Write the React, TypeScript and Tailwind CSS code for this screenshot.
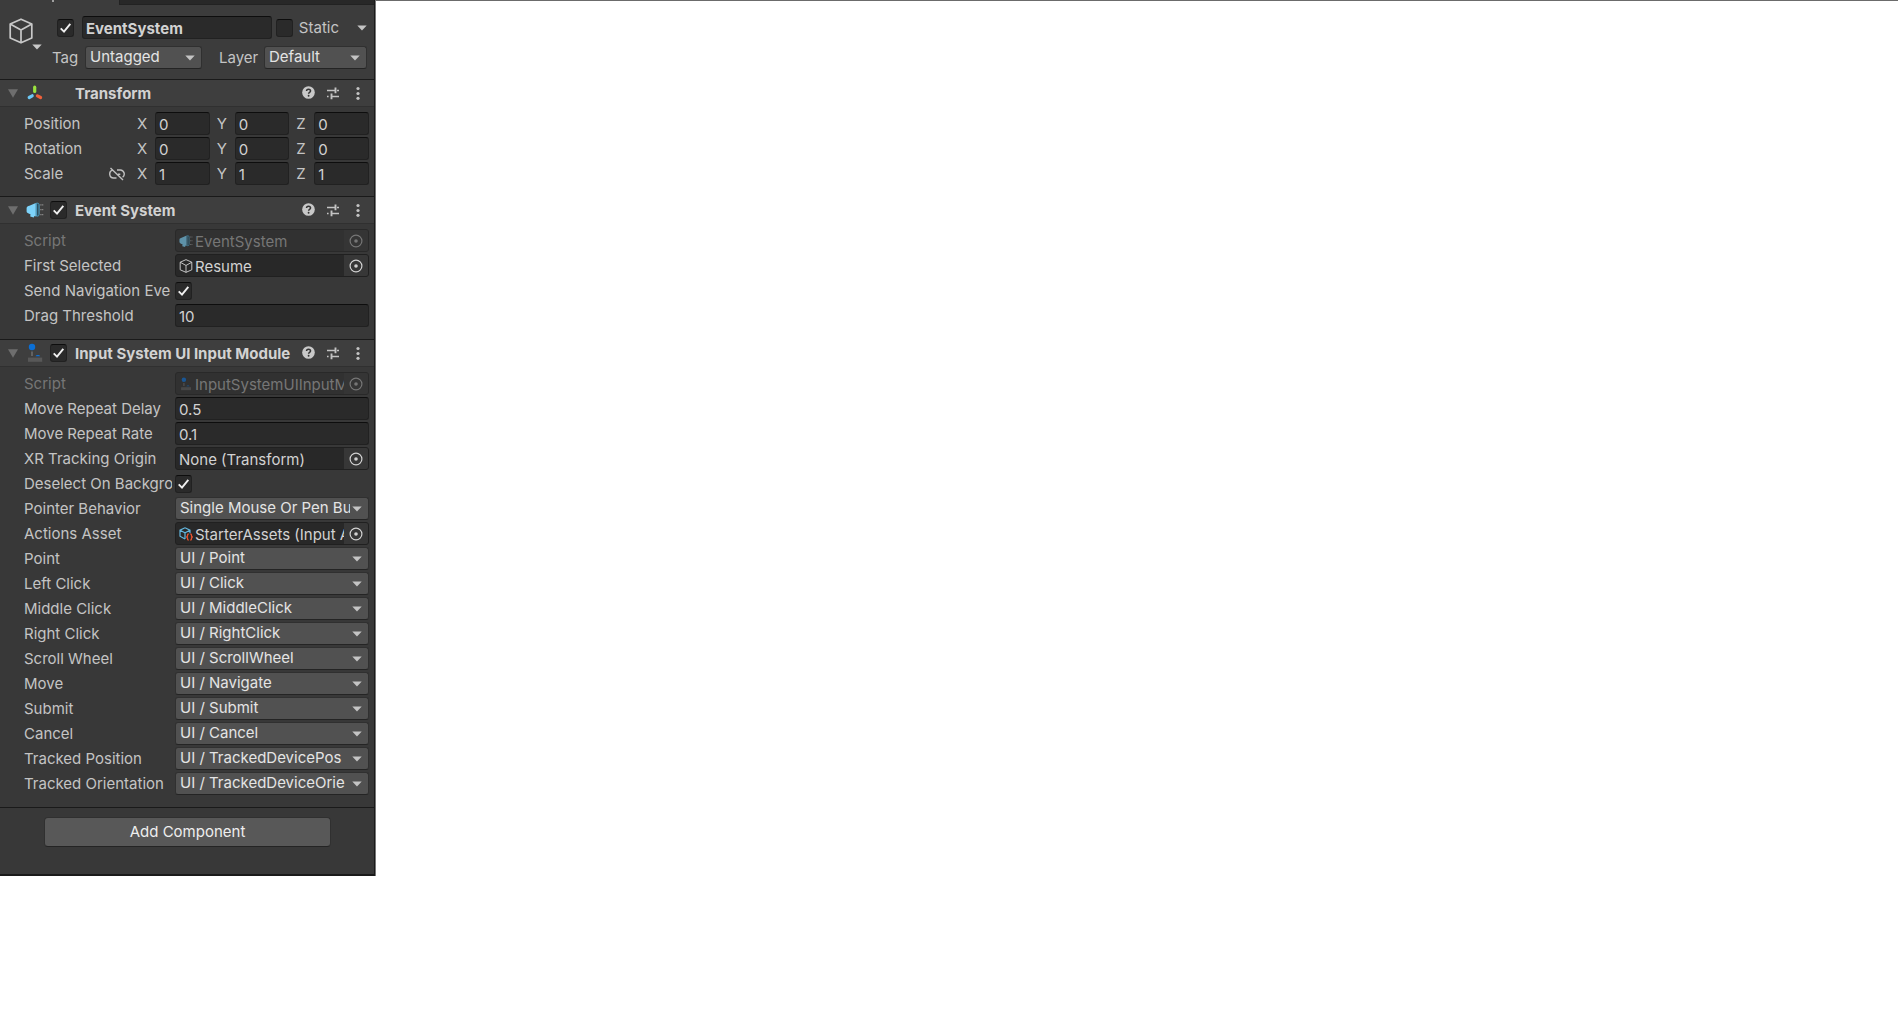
import { useId, useState, type ReactNode } from "react";

/* ---------- icons ---------- */

function CubeIcon({ className }: { className: string }) {
  return (
    <svg viewBox="0 0 24 26" fill="none" stroke="currentColor" strokeWidth="1.7" strokeLinejoin="round" className={className} aria-hidden="true">
      <path d="M12 1.2 22.8 6v14L12 24.8 1.2 20V6z" />
      <path d="M1.2 6 12 12l10.8-6M12 12v12.8" />
    </svg>
  );
}

function Triangle({ className }: { className: string }) {
  return (
    <svg viewBox="0 0 10 6" fill="currentColor" className={className} aria-hidden="true">
      <path d="M.3.4h9.400L5 5.600z" />
    </svg>
  );
}

function FoldoutIcon() {
  return (
    <svg viewBox="0 0 10 9" fill="currentColor" className="h-[9px] w-[10px]" aria-hidden="true">
      <path d="M0 .2h10L5 8.800z" />
    </svg>
  );
}

function TransformIcon() {
  return (
    <svg viewBox="0 0 18 18" className="h-[18px] w-[18px]" strokeLinecap="round" strokeWidth="3.2" aria-hidden="true">
      <path d="M8.700 3.200v4.200" stroke="#9be33f" />
      <path d="M6.200 11.800 3.200 13.500" stroke="#6cc8f5" />
      <path d="m11.400 11.800 3.200 1.700" stroke="#f0603a" />
    </svg>
  );
}

function MegaphoneIcon({ className }: { className: string }) {
  return (
    <svg viewBox="0 0 18 18" className={className} aria-hidden="true">
      <path d="M.6 7C.6 5.600 2 5.200 3.400 4.700L9.800 2v13.400l-1.400-.5-.6 1.700-3.600-1 .3-2.400-1.300-.5C1.600 12 .6 11.600.6 10.400z" fill="#7dd3fa" />
      <path d="M10.400 2.200h1.200c1.100 0 1.500.8 1.500 1.800v9.200c0 1.100-.5 1.900-1.500 1.900h-1.200z" fill="#2c4f60" stroke="#4fa3c9" strokeWidth="1" />
      <path d="M14.300 3.800h3M14.300 8.700h3M14.300 13.600h3" stroke="#8a8a8a" strokeWidth="1.300" strokeDasharray="1.300 .5" />
    </svg>
  );
}

function JoystickIcon({ className }: { className: string }) {
  return (
    <svg viewBox="0 0 18 20" className={className} aria-hidden="true">
      <circle cx="6" cy="4" r="3.200" fill="#0b6fd6" />
      <path d="M5 8.500h2V13H5z" fill="#626262" />
      <path d="M9.500 13.200c.5-1.600 4.200-1.600 4.700 0z" fill="#0b6fd6" />
      <path d="M2 14.600h14.200v4.200H2z" fill="#585858" />
    </svg>
  );
}

function ActionAssetIcon({ className }: { className: string }) {
  return (
    <svg viewBox="0 0 14 14" fill="none" className={className} aria-hidden="true">
      <path d="M6 .8 11 3.200v3M6 .8 1 3.200v6L6 12M1 3.200 6 5.800l5-2.600M6 5.800V12" stroke="#62b5dc" strokeWidth="1.200" />
      <path d="M9.700 7q-1.200 0-1.200 1.200v1L7.700 10l.8.800v1q0 1.200 1.200 1.200M11.300 7q1.200 0 1.200 1.200v1l.8.800-.8.800v1q0 1.200-1.200 1.200" stroke="#f0532d" strokeWidth="1.300" />
    </svg>
  );
}

function HelpIcon() {
  return (
    <svg viewBox="0 0 14 14" className="h-[13px] w-[13px]" aria-hidden="true">
      <circle cx="7" cy="7" r="6.800" fill="#c8c8c8" />
      <path d="M4.900 5.500c0-1.300.9-2.100 2.100-2.100s2.200.8 2.200 1.900c0 1.500-2.100 1.500-2.100 3" fill="none" stroke="#333" strokeWidth="1.600" />
      <circle cx="7.100" cy="10.500" r="1" fill="#333" />
    </svg>
  );
}

function PresetIcon() {
  return (
    <svg viewBox="0 0 14 14" className="h-[14px] w-[14px]" fill="none" stroke="#c4c4c4" aria-hidden="true">
      <path d="M1 4.500h8M11 4.500h2M1 10.500h1.600M5.500 10.500H13" strokeWidth="1.300" />
      <path d="M9.500 1.500v5.700M5.500 7.500v5.700" strokeWidth="1.900" />
    </svg>
  );
}

function MoreIcon() {
  return (
    <svg viewBox="0 0 4 14" className="h-[14px] w-[4px]" fill="#c4c4c4" aria-hidden="true">
      <circle cx="2" cy="2.500" r="1.600" />
      <circle cx="2" cy="7.500" r="1.600" />
      <circle cx="2" cy="12.300" r="1.600" />
    </svg>
  );
}

function UnlinkIcon() {
  return (
    <svg viewBox="0 0 16 14" className="h-[14px] w-[16px]" fill="none" stroke="#c0c0c0" strokeWidth="1.400" aria-hidden="true">
      <path d="M3.500 3.200A4 4 0 0 0 4.600 11H7.500M8 3h3.400a4 4 0 0 1 2.200 7.200M1.500 1l12.500 12M9 7.200h2.300" />
    </svg>
  );
}

function PickerIcon() {
  return (
    <svg viewBox="0 0 14 14" className="h-[14px] w-[14px]" aria-hidden="true">
      <circle cx="7" cy="7" r="5.900" fill="none" stroke="currentColor" strokeWidth="1.200" />
      <circle cx="7" cy="7" r="1.800" fill="currentColor" />
    </svg>
  );
}

/* ---------- controls ---------- */

function Tick({ id, label, initial = true }: { id?: string; label?: string; initial?: boolean }) {
  const [on, setOn] = useState(initial);
  return (
    <span className="relative h-[18px] w-[17px] shrink-0">
      <input
        id={id}
        type="checkbox"
        aria-label={label}
        checked={on}
        onChange={() => setOn(!on)}
        className="block h-[18px] w-[17px] appearance-none rounded-[3px] border border-[#212121] border-t-[#0d0d0d] bg-[#2a2a2a]"
      />
      {on && (
        <svg viewBox="0 0 17 18" fill="none" stroke="#f0f0f0" strokeWidth="1.900" className="pointer-events-none absolute inset-0 h-[18px] w-[17px]" aria-hidden="true">
          <path d="M3.700 9.300 7 12.600l6.300-7.700" />
        </svg>
      )}
    </span>
  );
}

function TextField({ id, label, value, bold = false }: { id?: string; label?: string; value: string; bold?: boolean }) {
  return (
    <input
      id={id}
      aria-label={label}
      defaultValue={value}
      className={
        "h-[23px] w-full min-w-0 flex-1 rounded-[3px] border border-[#212121] border-t-[#0d0d0d] bg-[#2a2a2a] px-[3px] pt-[2px] text-[#d2d2d2] " +
        (bold ? "font-bold" : "")
      }
    />
  );
}

function Dropdown({ id, value }: { id: string; value: string }) {
  return (
    <span className="relative min-w-0 flex-1">
      <select
        id={id}
        className="block h-[23px] w-full appearance-none rounded-[3px] border border-[#303030] border-b-[#242424] bg-[#515151] pr-[18px] pb-[2px] pl-[4px] text-[#e4e4e4]"
      >
        <option>{value}</option>
      </select>
      <Triangle className="pointer-events-none absolute top-[9px] right-[7px] h-[6px] w-[10px] text-[#c4c4c4]" />
    </span>
  );
}

function ObjectField({ id, value, icon, disabled = false }: { id: string; value: string; icon?: ReactNode; disabled?: boolean }) {
  return (
    <span
      className={
        "flex h-[23px] min-w-0 flex-1 items-center overflow-hidden rounded-[3px] border pl-[3px] " +
        (disabled ? "border-[#292929] bg-[#313131] text-[#767676]" : "border-[#202020] bg-[#282828] text-[#d2d2d2]")
      }
    >
      {icon}
      <input id={id} readOnly disabled={disabled} value={value} className="h-full min-w-0 flex-1 bg-transparent pt-[2px]" />
      <button
        type="button"
        disabled={disabled}
        aria-label={"Pick " + value}
        className={"flex h-full w-[24px] shrink-0 items-center justify-center " + (disabled ? "bg-[#353535]" : "bg-[#373737]")}
      >
        <PickerIcon />
      </button>
    </span>
  );
}

/* ---------- rows and sections ---------- */

function Row({ label, dim = false, children }: { label: string; dim?: boolean; children: (id: string) => ReactNode }) {
  const id = useId();
  return (
    <div className="flex h-[23px] items-center">
      <label
        htmlFor={id}
        className={"mr-[3px] w-[148px] shrink-0 overflow-hidden whitespace-nowrap " + (dim ? "text-[#767676]" : "text-[#c4c4c4]")}
      >
        {label}
      </label>
      {children(id)}
    </div>
  );
}

function VectorRow({ label, value, icon }: { label: string; value: string; icon?: ReactNode }) {
  return (
    <div className="flex h-[23px] items-center" role="group" aria-label={label}>
      <div className="flex w-[113px] shrink-0 items-center justify-between pr-[12px]">
        <span>{label}</span>
        {icon}
      </div>
      <div className="grid flex-1 grid-cols-3 gap-[7px]">
        {["X", "Y", "Z"].map((axis) => (
          <label key={axis} className="flex items-center">
            <span className="w-[18px] shrink-0">{axis}</span>
            <TextField value={value} />
          </label>
        ))}
      </div>
    </div>
  );
}

function Section({ title, icon, toggle = true, children }: { title: string; icon: ReactNode; toggle?: boolean; children: ReactNode }) {
  return (
    <section>
      <header className="flex h-[28px] items-center border-t border-b border-t-[#1a1a1a] border-b-[#303030] bg-[#3e3e3e] pr-[8px] pl-[8px]">
        <button type="button" aria-label={"Collapse " + title} className="mr-[8px] shrink-0 text-[#6e6e6e]">
          <FoldoutIcon />
        </button>
        <span className="mr-[6px] flex w-[18px] shrink-0 justify-center">{icon}</span>
        <span className="mr-[8px] flex w-[17px] shrink-0">{toggle && <Tick label={"Enable " + title} />}</span>
        <h2 className="min-w-0 flex-1 pt-[1px] font-bold whitespace-nowrap text-[#d2d2d2]">{title}</h2>
        <div className="flex shrink-0">
          <button type="button" aria-label="Help" className="flex w-[16px] justify-center">
            <HelpIcon />
          </button>
          <button type="button" aria-label="Presets" className="flex w-[34px] justify-center">
            <PresetIcon />
          </button>
          <button type="button" aria-label="More" className="flex w-[16px] justify-center">
            <MoreIcon />
          </button>
        </div>
      </header>
      <div className={"flex flex-col gap-[2px] pt-[5px] pr-[5px] pl-[24px] " + (toggle ? "pb-[12px]" : "pb-[11px]")}>{children}</div>
    </section>
  );
}

const ACTIONS: [string, string][] = [
  ["Point", "UI / Point"],
  ["Left Click", "UI / Click"],
  ["Middle Click", "UI / MiddleClick"],
  ["Right Click", "UI / RightClick"],
  ["Scroll Wheel", "UI / ScrollWheel"],
  ["Move", "UI / Navigate"],
  ["Submit", "UI / Submit"],
  ["Cancel", "UI / Cancel"],
  ["Tracked Position", "UI / TrackedDevicePos"],
  ["Tracked Orientation", "UI / TrackedDeviceOrie"],
];

export default function App() {
  return (
    <div className="min-h-screen border-t border-[#6b6b6b] bg-white font-['Inter',sans-serif] text-[15px] leading-[20px] text-[#c4c4c4]">
      <aside className="-mt-px w-[376px] max-w-full border-r border-r-[#777777]">
        <div className="border-r border-b-2 border-[#1a1a1a] bg-[#383838]">
          <div className="flex h-[5px] bg-[#3c3c3c]">
            <span className="ml-[52px] h-[2px] w-[2px] bg-[#a0a0a0]" />
            <span className="ml-[65px] flex-1 border-b border-l border-[#222222] bg-[#282828]" />
          </div>

          <div className="flex h-[74px] bg-[#3c3c3c] pt-[11px] pr-[7px] pl-[8px]">
            <button type="button" aria-label="Select icon" className="flex h-[35px] w-[36px] shrink-0 flex-col items-start text-[#c8c8c8]">
              <CubeIcon className="mt-[2px] h-[26px] w-[26px]" />
              <Triangle className="ml-[24px] h-[6px] w-[10px]" />
            </button>
            <div className="flex min-w-0 flex-1 flex-col gap-[7px]">
              <div className="flex items-center pl-[13px]">
                <Tick label="Active" />
                <span className="ml-[8px] flex min-w-0 flex-1">
                  <TextField label="Name" value="EventSystem" bold />
                </span>
                <span className="mr-[6px] ml-[4px] flex">
                  <Tick id="static" initial={false} />
                </span>
                <label htmlFor="static">Static</label>
                <button type="button" aria-label="Static options" className="ml-[18px]">
                  <Triangle className="h-[6px] w-[10px]" />
                </button>
              </div>
              <div className="flex items-center pl-[8px]">
                <label htmlFor="tag" className="w-[33px] shrink-0">Tag</label>
                <span className="flex min-w-0 flex-[117]">
                  <Dropdown id="tag" value="Untagged" />
                </span>
                <label htmlFor="layer" className="ml-[17px] w-[45px] shrink-0">Layer</label>
                <span className="flex min-w-0 flex-[103]">
                  <Dropdown id="layer" value="Default" />
                </span>
              </div>
            </div>
          </div>

          <Section title="Transform" icon={<TransformIcon />} toggle={false}>
            <VectorRow label="Position" value="0" />
            <VectorRow label="Rotation" value="0" />
            <VectorRow label="Scale" value="1" icon={<UnlinkIcon />} />
          </Section>

          <Section title="Event System" icon={<MegaphoneIcon className="h-[18px] w-[18px]" />}>
            <Row label="Script" dim>
              {(id) => <ObjectField id={id} disabled value="EventSystem" icon={<MegaphoneIcon className="mr-[2px] h-[14px] w-[14px] shrink-0 opacity-60" />} />}
            </Row>
            <Row label="First Selected">
              {(id) => <ObjectField id={id} value="Resume" icon={<CubeIcon className="mr-[2px] h-[14px] w-[14px] shrink-0" />} />}
            </Row>
            <Row label="Send Navigation Eve">{(id) => <Tick id={id} />}</Row>
            <Row label="Drag Threshold">{(id) => <TextField id={id} value="10" />}</Row>
          </Section>

          <Section title="Input System UI Input Module" icon={<JoystickIcon className="h-[20px] w-[18px]" />}>
            <Row label="Script" dim>
              {(id) => <ObjectField id={id} disabled value="InputSystemUIInputModule" icon={<JoystickIcon className="mr-[2px] h-[14px] w-[14px] shrink-0 opacity-60" />} />}
            </Row>
            <Row label="Move Repeat Delay">{(id) => <TextField id={id} value="0.5" />}</Row>
            <Row label="Move Repeat Rate">{(id) => <TextField id={id} value="0.1" />}</Row>
            <Row label="XR Tracking Origin">{(id) => <ObjectField id={id} value="None (Transform)" />}</Row>
            <Row label="Deselect On Backgro">{(id) => <Tick id={id} />}</Row>
            <Row label="Pointer Behavior">{(id) => <Dropdown id={id} value="Single Mouse Or Pen Bu" />}</Row>
            <Row label="Actions Asset">
              {(id) => <ObjectField id={id} value="StarterAssets (Input Action Asset)" icon={<ActionAssetIcon className="mr-[2px] h-[14px] w-[14px] shrink-0" />} />}
            </Row>
            {ACTIONS.map(([label, value]) => (
              <Row key={label} label={label}>{(id) => <Dropdown id={id} value={value} />}</Row>
            ))}
          </Section>

          <div className="border-t border-[#1a1a1a] pt-[9px] pr-[43px] pb-[27px] pl-[44px]">
            <button type="button" className="block h-[30px] w-full rounded-[4px] border border-[#303030] border-b-[#242424] bg-[#585858] text-[#eeeeee]">
              Add Component
            </button>
          </div>
        </div>
      </aside>
    </div>
  );
}
